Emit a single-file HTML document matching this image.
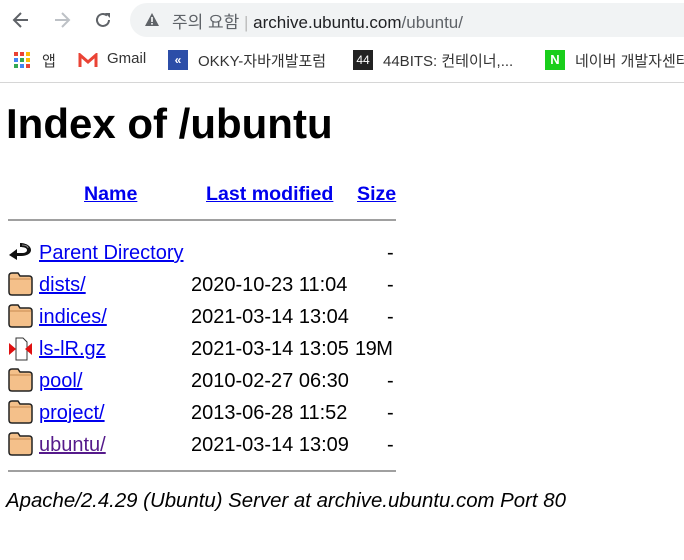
<!DOCTYPE html>
<html><head><meta charset="utf-8"><style>
*{margin:0;padding:0;box-sizing:border-box}
body{width:684px;height:560px;overflow:hidden;background:#fff;font-family:"Liberation Sans","Noto Sans CJK KR",sans-serif;position:relative;color:#000}
.a{position:absolute;white-space:nowrap}
a{color:#0000ee;text-decoration:underline}
.top{position:absolute;left:0;top:0;width:684px;height:83px;background:#fff;border-bottom:1px solid #d6d6d6}
.pill{position:absolute;left:130px;top:3px;width:600px;height:34px;border-radius:17px;background:#f1f3f4}
.bm{font-size:15px;color:#333;top:50px}
.row{font-size:20px;height:24px;line-height:24px}
.hd{font-size:19.6px;font-weight:bold}
</style></head><body>
<div class="top">
<svg class="a" style="left:10px;top:10px" width="22" height="20" viewBox="0 0 22 20"><path d="M18 10H5M11 3L4 10l7 7" stroke="#5f6368" stroke-width="2" fill="none"/></svg>
<svg class="a" style="left:52px;top:10px" width="22" height="20" viewBox="0 0 22 20"><path d="M3 10h13M10 3l7 7-7 7" stroke="#bdc1c6" stroke-width="2" fill="none"/></svg>
<svg class="a" style="left:92px;top:9px" width="22" height="22" viewBox="0 0 22 22"><path d="M17 11a6 6 0 1 1-2-4.5" stroke="#5f6368" stroke-width="2" fill="none"/><path d="M13 4h5v5z" fill="#5f6368"/></svg>
<div class="pill"></div>
<svg class="a" style="left:144px;top:12px" width="16" height="15" viewBox="0 0 16 15"><path d="M8 1L15 14H1z" fill="#5f6368"/><rect x="7.2" y="5" width="1.6" height="5" fill="#fff"/><rect x="7.2" y="11" width="1.6" height="1.6" fill="#fff"/></svg>
<div class="a" style="left:172px;top:8px;font-size:17px;color:#5f6368">주의 요함 <span style="color:#bbb">|</span> <span style="color:#202124">archive.ubuntu.com</span>/ubuntu/</div>
<svg class="a" style="left:14px;top:52px" width="16" height="16"><rect x="0" y="0" width="4" height="4" fill="#e94235"/><rect x="6" y="0" width="4" height="4" fill="#e94235"/><rect x="12" y="0" width="4" height="4" fill="#fbbc04"/><rect x="0" y="6" width="4" height="4" fill="#4285f4"/><rect x="6" y="6" width="4" height="4" fill="#34a853"/><rect x="12" y="6" width="4" height="4" fill="#fbbc04"/><rect x="0" y="12" width="4" height="4" fill="#34a853"/><rect x="6" y="12" width="4" height="4" fill="#4285f4"/><rect x="12" y="12" width="4" height="4" fill="#e94235"/></svg>
<div class="a bm" style="left:42px">앱</div>
<svg class="a" style="left:78px;top:53px" width="20" height="15"><path d="M2 14V2l8 7 8-7v12" stroke="#ea4335" stroke-width="3" fill="none"/></svg>
<div class="a bm" style="left:107px">Gmail</div>
<div class="a" style="left:168px;top:50px;width:20px;height:20px;background:#2c4ea8;color:#fff;font-size:12px;font-weight:bold;text-align:center;line-height:20px">«</div>
<div class="a bm" style="left:198px">OKKY-자바개발포럼</div>
<div class="a" style="left:353px;top:50px;width:20px;height:20px;background:#222;color:#fff;font-size:12px;text-align:center;line-height:20px">44</div>
<div class="a bm" style="left:383px">44BITS: 컨테이너,...</div>
<div class="a" style="left:545px;top:50px;width:20px;height:20px;background:#19ce1b;color:#fff;font-size:13px;font-weight:bold;text-align:center;line-height:20px">N</div>
<div class="a bm" style="left:575px">네이버 개발자센터</div>
</div>

<div class="a" style="left:6px;top:100px;font-size:42px;font-weight:bold">Index of /ubuntu</div>

<div class="a row hd" style="top:182px;left:84px"><a>Name</a></div>
<div class="a row hd" style="top:182px;left:206px"><a>Last modified</a></div>
<div class="a row hd" style="top:182px;left:357px"><a>Size</a></div>
<div class="a" style="left:8px;top:219px;width:388px;height:2px;background:#a0a0a0"></div>

<svg class="a" style="left:8px;top:241px" width="26" height="24" viewBox="0 0 26 24"><path d="M12 2c6 0 11 3 11 7s-5 6-10 6H9v4L1 14l8-6v4h5c3 0 5-1 5-3s-3-3-7-3z" fill="#111"/><path d="M14 4c3 0 6 1 6 3" stroke="#888" fill="none"/></svg>
<div class="a row" style="top:241px;left:39px"><a>Parent Directory</a></div>
<div class="a row" style="top:241px;left:387px">-</div>

<div class="a row" style="top:273px;left:39px"><a>dists/</a></div>
<div class="a row" style="top:273px;left:191px">2020-10-23 11:04</div>
<div class="a row" style="top:273px;left:387px">-</div>
<div class="a row" style="top:305px;left:39px"><a>indices/</a></div>
<div class="a row" style="top:305px;left:191px">2021-03-14 13:04</div>
<div class="a row" style="top:305px;left:387px">-</div>
<svg class="a" style="left:8px;top:337px" width="25" height="24" viewBox="0 0 25 24"><path d="M8 1h7l4 4v18H8z" fill="#fff" stroke="#333"/><path d="M1 6l7 6-7 6zM24 6l-7 6 7 6z" fill="#e01010"/></svg>
<div class="a row" style="top:337px;left:39px"><a>ls-lR.gz</a></div>
<div class="a row" style="top:337px;left:191px">2021-03-14 13:05</div>
<div class="a row" style="top:337px;left:355px;letter-spacing:-0.5px">19M</div>
<div class="a row" style="top:369px;left:39px"><a>pool/</a></div>
<div class="a row" style="top:369px;left:191px">2010-02-27 06:30</div>
<div class="a row" style="top:369px;left:387px">-</div>
<div class="a row" style="top:401px;left:39px"><a>project/</a></div>
<div class="a row" style="top:401px;left:191px">2013-06-28 11:52</div>
<div class="a row" style="top:401px;left:387px">-</div>
<div class="a row" style="top:433px;left:39px"><a style="color:#551a8b">ubuntu/</a></div>
<div class="a row" style="top:433px;left:191px">2021-03-14 13:09</div>
<div class="a row" style="top:433px;left:387px">-</div>

<svg class="a" style="left:8px;top:272px" width="26" height="184">
<defs><g id="f"><path d="M1 4q0-3 3-3h6l2 3h9q3 0 3 3v13q0 3-3 3H4q-3 0-3-3z" fill="#f4c08a" stroke="#222" stroke-width="1.5"/><path d="M2 7h21" stroke="#c88a50"/></g></defs>
<use href="#f" y="0"/><use href="#f" y="32"/><use href="#f" y="96"/><use href="#f" y="128"/><use href="#f" y="160"/>
</svg>

<div class="a" style="left:8px;top:470px;width:388px;height:2px;background:#a0a0a0"></div>
<div class="a" style="left:6px;top:490px;font-size:20.4px;font-style:italic">Apache/2.4.29 (Ubuntu) Server at archive.ubuntu.com Port 80</div>
</body></html>
